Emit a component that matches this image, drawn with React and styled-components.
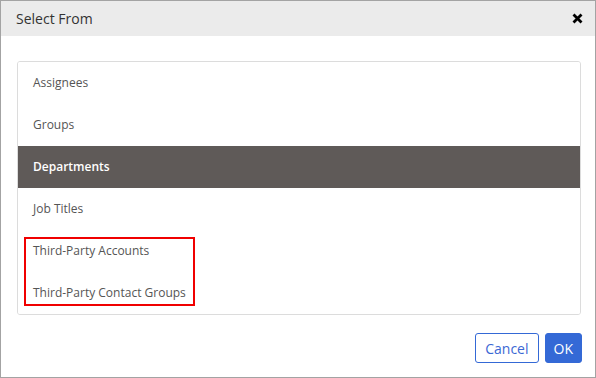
import React from "react";
import styled, { createGlobalStyle } from "styled-components";

const Global = createGlobalStyle`
  html, body { margin: 0; padding: 0; background: #fff; }
  * { box-sizing: border-box; }
  body { font-family: "Open Sans", "Noto Sans", sans-serif; }
`;

const Dialog = styled.div`
  width: 596px;
  height: 378px;
  border: 1px solid #a3a3a3;
  display: flex;
  flex-direction: column;
  background: #fff;
`;

const Header = styled.div`
  height: 35px;
  background: #ebebeb;
  display: flex;
  align-items: center;
  justify-content: space-between;
  padding: 0 11px 0 15px;
`;

const Title = styled.div`
  font-size: 14px;
  color: #333;
`;

const CloseButton = styled.button`
  border: none;
  background: transparent;
  padding: 0;
  width: 14px;
  height: 14px;
  display: flex;
  align-items: center;
  justify-content: center;
  cursor: pointer;
`;

const Body = styled.div`
  flex: 1;
  padding: 25px 14px 0 16px;
`;

const List = styled.div`
  position: relative;
  border: 1px solid #dcdcdc;
  border-radius: 3px;
  overflow: hidden;
`;

const Row = styled.div`
  height: 42px;
  display: flex;
  align-items: center;
  padding: 0 0 2px 15px;
  font-size: 12px;
  color: ${(p) => (p.$selected ? "#fff" : "#555")};
  background: ${(p) => (p.$selected ? "#5f5a58" : "#fff")};
  font-weight: ${(p) => (p.$selected ? 600 : 400)};
`;

const Highlight = styled.div`
  position: absolute;
  left: 6px;
  top: 175px;
  width: 171px;
  height: 69px;
  border: 2px solid #f00000;
  pointer-events: none;
`;

const Footer = styled.div`
  display: flex;
  justify-content: flex-end;
  gap: 6px;
  padding: 0 13px 14px 0;
`;

const Button = styled.button`
  height: 30px;
  border-radius: 3px;
  font-family: "Open Sans", "Noto Sans", sans-serif;
  font-size: 14px;
  padding: 0 ${(p) => (p.$primary ? "8px" : "9px")};
  border: 1px solid #3469d6;
  background: ${(p) => (p.$primary ? "#3469d6" : "#fff")};
  color: ${(p) => (p.$primary ? "#fff" : "#3b68d4")};
  cursor: pointer;
`;

const items = [
  "Assignees",
  "Groups",
  "Departments",
  "Job Titles",
  "Third-Party Accounts",
  "Third-Party Contact Groups",
];

export default function App() {
  return (
    <>
      <Global />
      <Dialog>
        <Header>
          <Title>Select From</Title>
          <CloseButton aria-label="Close">
            <svg width="11" height="11" viewBox="0 0 11 11">
              <path d="M1.5 1.5 L9.5 9.5 M9.5 1.5 L1.5 9.5" stroke="#000" strokeWidth="2.8" strokeLinecap="butt" />
            </svg>
          </CloseButton>
        </Header>
        <Body>
          <List>
            {items.map((t) => (
              <Row key={t} $selected={t === "Departments"}>
                {t}
              </Row>
            ))}
            <Highlight />
          </List>
        </Body>
        <Footer>
          <Button>Cancel</Button>
          <Button $primary>OK</Button>
        </Footer>
      </Dialog>
    </>
  );
}
